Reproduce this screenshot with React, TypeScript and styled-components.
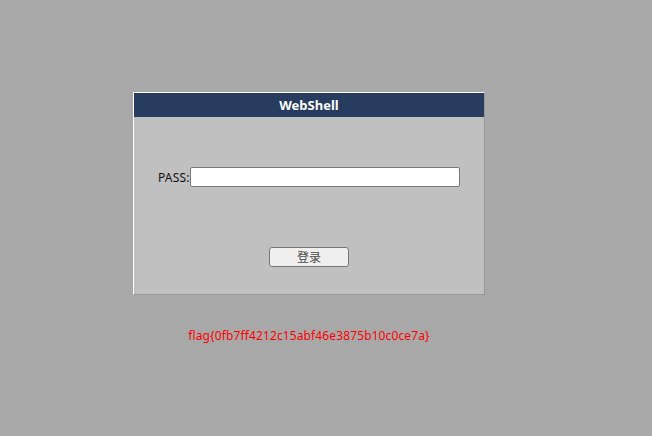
import React from "react";
import styled, { createGlobalStyle } from "styled-components";

const Global = createGlobalStyle`
  html, body { margin: 0; padding: 0; background: #a8a8a8; }
  body { font-family: "Noto Sans", "Noto Sans CJK SC", sans-serif; font-size: 12px; }
`;

const Page = styled.div`
  padding: 92px 0 0 133px;
  width: 352px;
`;

const Panel = styled.div`
  width: 352px;
  box-sizing: border-box;
  border-top: 1px solid #ffffff;
  border-left: 1px solid #ffffff;
  border-right: 1px solid #979797;
  border-bottom: 1px solid #979797;
  background: #c0c0c0;
`;

const Header = styled.div`
  height: 24px;
  background: #273c5e;
  color: #ffffff;
  font-weight: bold;
  font-size: 13px;
  display: flex;
  align-items: center;
  justify-content: center;
`;

const Body = styled.div`
  display: flex;
  flex-direction: column;
  padding: 50px 0 27px 0;
`;

const Row = styled.div`
  display: flex;
  align-items: center;
  height: 20px;
  padding-left: 24px;
  color: #111;
  font-size: 12px;
  letter-spacing: 0.2px;
`;

const Input = styled.input`
  width: 270px;
  height: 20px;
  box-sizing: border-box;
  border: 1px solid #7a7a7a;
  border-radius: 2px;
  background: #fff;
  margin: 0;
  padding: 0 2px;
  outline: none;
`;

const ButtonRow = styled.div`
  display: flex;
  justify-content: center;
  margin-top: 60px;
`;

const Button = styled.button`
  width: 80px;
  height: 20px;
  box-sizing: border-box;
  border: 1px solid #777;
  border-radius: 3px;
  background: #efefef;
  color: #4a4a4a;
  font-family: "Noto Sans CJK SC", sans-serif;
  font-size: 12px;
  padding: 0;
  margin: 0;
  line-height: 18px;
`;

const Flag = styled.div`
  color: #ff0000;
  text-align: center;
  margin-top: 33px;
  font-size: 12px;
  line-height: 16px;
  letter-spacing: 0.12px;
`;

export default function App() {
  return (
    <>
      <Global />
      <Page>
        <Panel>
          <Header>WebShell</Header>
          <Body>
            <Row>
              PASS:<Input type="password" />
            </Row>
            <ButtonRow>
              <Button>登录</Button>
            </ButtonRow>
          </Body>
        </Panel>
        <Flag>flag{"{"}0fb7ff4212c15abf46e3875b10c0ce7a{"}"}</Flag>
      </Page>
    </>
  );
}
